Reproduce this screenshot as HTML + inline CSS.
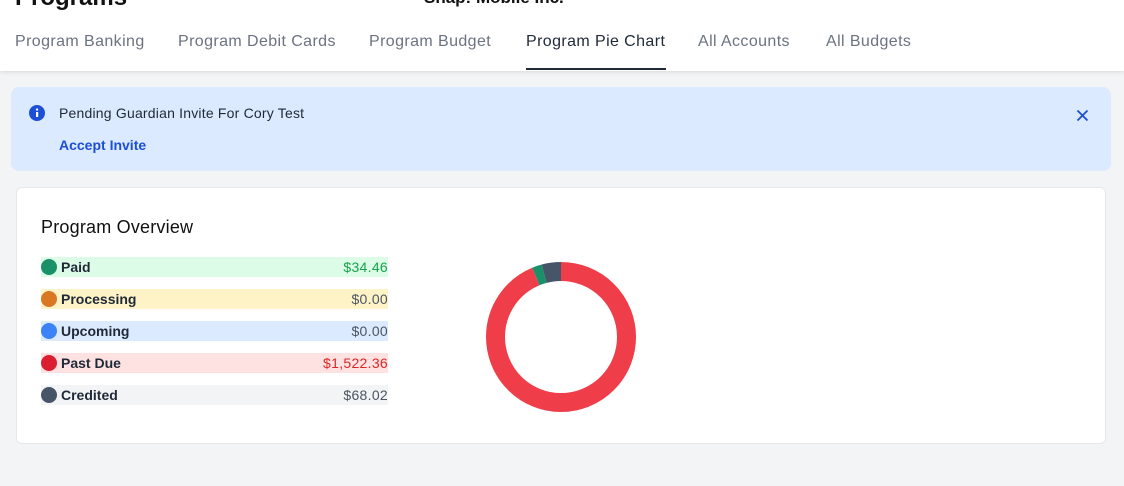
<!DOCTYPE html>
<html><head><style>
*{margin:0;padding:0;box-sizing:border-box}
body{width:1124px;height:486px;overflow:hidden;background:#f3f4f6;font-family:"Liberation Sans",Arial,sans-serif;position:relative}
.hdr{position:absolute;left:0;top:0;width:1124px;height:71px;background:#fff;box-shadow:0 1px 4px rgba(0,0,0,.12)}
.t1{position:absolute;left:15px;top:-16px;font-size:24px;font-weight:bold;color:#111}
.t2{position:absolute;left:424px;top:-12px;font-size:17px;font-weight:bold;color:#111}
.tab{position:absolute;top:33px;font-size:16px;color:#6b7280;letter-spacing:0.4px}
.tab.a{color:#1f2937}
.ul{position:absolute;left:526px;top:68px;width:140px;height:2px;background:#1f2937}
.al{position:absolute;left:11px;top:87px;width:1100px;height:84px;background:#dbeafe;border-radius:8px}
.card{position:absolute;left:16px;top:187px;width:1090px;height:257px;background:#fff;border:1px solid #e5e7eb;border-radius:6px}
.row{position:absolute;left:41px;width:347px;height:20px;font-size:14px;font-weight:bold;color:#1f2937}
.row .d{position:absolute;left:0;top:2px;width:16px;height:16px;border-radius:50%}
.row .l{position:absolute;left:20px;top:2px}
.row .v{position:absolute;right:0;top:2px;font-weight:normal;color:#4b5563;letter-spacing:0.3px}
</style></head><body>
<div class="hdr">
<div class="t1">Programs</div><div class="t2">Snap! Mobile Inc.</div>
<div class="tab" style="left:15px">Program Banking</div>
<div class="tab" style="left:178px">Program Debit Cards</div>
<div class="tab" style="left:369px">Program Budget</div>
<div class="tab a" style="left:526px">Program Pie Chart</div>
<div class="tab" style="left:698px">All Accounts</div>
<div class="tab" style="left:826px">All Budgets</div>
<div class="ul"></div>
</div>
<div class="al">
<svg style="position:absolute;left:18px;top:18px" width="16" height="16" viewBox="0 0 16 16"><circle cx="8" cy="8" r="8" fill="#1d4ed8"/><rect x="7" y="7" width="2.2" height="5" fill="#fff"/><circle cx="8.1" cy="4.6" r="1.2" fill="#fff"/></svg>
<div style="position:absolute;left:48px;top:18px;font-size:14px;color:#1f2937;letter-spacing:0.2px">Pending Guardian Invite For Cory Test</div>
<div style="position:absolute;left:48px;top:50px;font-size:14px;font-weight:bold;color:#1d4ed8">Accept Invite</div>
<svg style="position:absolute;left:1065px;top:22px" width="13" height="13" viewBox="0 0 13 13"><path d="M1.5 1.5L11.5 11.5M11.5 1.5L1.5 11.5" stroke="#1d4ed8" stroke-width="1.8"/></svg>
</div>
<div class="card"></div>
<div style="position:absolute;left:41px;top:217px;font-size:18px;color:#111;letter-spacing:0.2px">Program Overview</div>
<div class="row" style="top:257px;background:#dcfce7"><span class="d" style="background:#1a9068"></span><span class="l">Paid</span><span class="v" style="color:#16a34a">$34.46</span></div>
<div class="row" style="top:289px;background:#fef3c7"><span class="d" style="background:#d97722"></span><span class="l">Processing</span><span class="v">$0.00</span></div>
<div class="row" style="top:321px;background:#dbeafe"><span class="d" style="background:#3b82f6"></span><span class="l">Upcoming</span><span class="v">$0.00</span></div>
<div class="row" style="top:353px;background:#fee2e2"><span class="d" style="background:#dc1f30"></span><span class="l">Past Due</span><span class="v" style="color:#dc2626">$1,522.36</span></div>
<div class="row" style="top:385px;background:#f3f4f6"><span class="d" style="background:#475569"></span><span class="l">Credited</span><span class="v">$68.02</span></div>
<svg style="position:absolute;left:486px;top:262px" width="150" height="150" viewBox="0 0 150 150">
<g transform="rotate(-90 75 75)" fill="none" stroke-width="19">
<circle cx="75" cy="75" r="65.5" stroke="#ef3e4a" stroke-dasharray="385.6 500"/>
<circle cx="75" cy="75" r="65.5" stroke="#1a9068" stroke-dasharray="0 385.6 8.7 500"/>
<circle cx="75" cy="75" r="65.5" stroke="#475569" stroke-dasharray="0 394.3 17.3 500"/>
</g></svg>
</body></html>
